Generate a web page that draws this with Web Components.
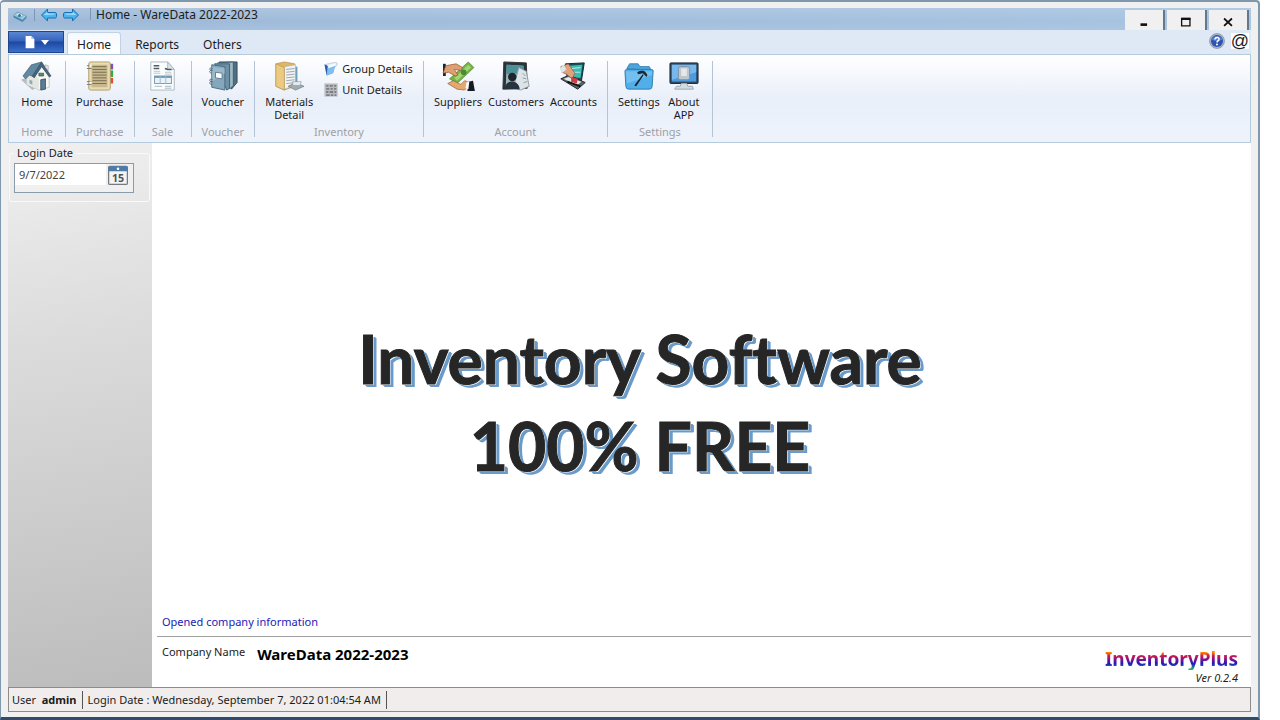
<!DOCTYPE html>
<html lang="en">
<head>
<meta charset="utf-8">
<title>Home - WareData 2022-2023</title>
<style>
html,body{margin:0;height:100%;background:#fff}
body{font:11px/16px "Noto Sans","Open Sans",sans-serif;color:#1c1c1c}
</style>
</head>
<body>
<inventory-app></inventory-app>
<script>
const parse=html=>{const t=document.createElement('template');t.innerHTML=html;return t.content;};
const define=(name,html,init)=>{
  const content=parse(html);
  customElements.define(name,class extends HTMLElement{
    constructor(){super();this.attachShadow({mode:'open'}).append(content.cloneNode(true));}
    connectedCallback(){if(init&&!this.ready){this.ready=true;init(this,this.shadowRoot);}}
  });
};

const ICONS={
app:`<path d="M3 17l7-7 19 8-8 8z" fill="#9ccbe2" stroke="#5b93b3"/><path d="M3 17v4l18 9 8-8v-4l-8 8z" fill="#4c88ad"/><path d="M8 15c3-5 12-3 14 3-5 3-10 2-14-3z" fill="#e8f6fc" stroke="#3b7ba3"/><circle cx="15" cy="17" r="3" fill="#30749f"/>`,
left:`<path d="M1 16L13 4v7h15c2 0 3 1 3 3v5c0 2-1 3-3 3H13v6z" fill="#4ab5ef" stroke="#176fb5" stroke-width="2"/><path d="M6 16l7-6v3h14v2z" fill="#a6e1ff"/>`,
right:`<path d="M31 16L19 4v7H4c-2 0-3 1-3 3v5c0 2 1 3 3 3h15v6z" fill="#4ab5ef" stroke="#176fb5" stroke-width="2"/><path d="M26 16l-7-6v3H5v2z" fill="#a6e1ff"/>`,
home:`<path d="M-1 20l9-4 8 12-5 3z" fill="#8f989d" opacity=".6"/><path d="M5 14L20 4l9 12v12l-11 3-13-6z" fill="#f8f7f3" stroke="#a9aaa5" stroke-width=".6"/><path d="M5 16l8-2 5 5v12L5 25z" fill="#e4e6e2"/><path d="M1 16L10 4l11-3-8 16-5-2-4 4z" fill="#6189a2" stroke="#2e4b60" stroke-width=".6"/><path d="M21 1l10 15-2 1-8-11-8 12-2-2z" fill="#44677f" stroke="#2b4558" stroke-width=".6"/><path d="M20 20l5-1v11l-5 1z" fill="#5a7d96" stroke="#2c424f" stroke-width=".8"/><path d="M18 13h5v3h-5z" fill="#4b9568" stroke="#344" stroke-width=".7"/><path d="M8 20l3 1v4l-3-1z" fill="#8eaabc"/><path d="M25 4l3 1v5l-3-3z" fill="#e8e5df" stroke="#888" stroke-width=".5"/>`,
purchase:`<rect x="26" y="3" width="4" height="6" fill="#7752c3"/><rect x="26" y="10" width="4" height="7" fill="#32ac3c"/><rect x="26" y="18" width="4" height="6" fill="#e44d30"/><rect x="4" y="1" width="23" height="30" rx="2" fill="#eadcae" stroke="#b09c6c"/><rect x="7" y="4" width="17" height="24" fill="#c7b98d"/><path d="M8 6h15M8 9h15M8 12h15M8 15h15M8 18h15M8 21h15M8 24h15" stroke="#756b50"/><path d="M2 5h5M2 8h5M2 22h5M2 25h5" stroke="#777" stroke-width="1"/><circle cx="6" cy="5" r="1.2" fill="#fff"/><circle cx="6" cy="23" r="1.2" fill="#fff"/>`,
sale:`<path d="M3 1h18l7 8v22H3z" fill="#fbfcfd" stroke="#adb8bf"/><path d="M21 1v8h7z" fill="#dce5e9" stroke="#aab4bb"/><path d="M6 5h6M6 8h6M18 8l3 1h4" stroke="#4c5d69" stroke-width="1.5"/><path d="M6 11h7M6 13h7M18 12h7M18 14h7" stroke="#bbc5ca"/><rect x="7" y="16" width="18" height="8" fill="#e8f3f9" stroke="#779bb0"/><path d="M7 17h18" stroke="#6e98b4" stroke-width="2"/><path d="M13 16v8M19 16v8M7 27h8M18 27h7M18 29h7" stroke="#9fb9c8"/>`,
voucher:`<path d="M12 1l19 0v22l-6 7z" fill="#516f81" stroke="#344d5c"/><path d="M10 2l17-1v25l-4 4" fill="#9fb9c7" stroke="#405e70"/><path d="M7 3l16 0v26l-3 2z" fill="#6e91a5" stroke="#405e70"/><path d="M4 4l14 2v25L4 28z" fill="#84a7bc" stroke="#476b80"/><path d="M4 6l14 2v5L4 22z" fill="#b1cbd9" opacity=".5"/><path d="M8 12l7 1v6l-7-1z" fill="#fff" stroke="#5a7c90"/><path d="M5 8c-4-2-4 2-1 2m1 0c-4-1-4 3-1 3m1 7c-4-2-4 2-1 2m1 0c-4-1-4 3-1 3" fill="none" stroke="#506775"/>`,
materials:`<path d="M2 3l9-2 11 2v24l-11 4-9-4z" fill="#dfb661" stroke="#b88d46" stroke-width=".7"/><path d="M11 6l12-2v22l-12 4z" fill="#f1f3f3" stroke="#9eaaae" stroke-width=".6"/><path d="M13 9l9-1M13 12l9-1M13 15l9-1M13 18l9-1M13 21l9-1M13 24l9-1" stroke="#97a5ad"/><path d="M2 3l9 4v24L2 27z" fill="#ecca82" stroke="#bd9648" stroke-width=".7"/><path d="M24 6v17" stroke="#6fa1b8" stroke-width="2"/><path d="M15 27l8-4 9 4-9 4z" fill="#a1acb2" stroke="#5f6c72" stroke-width=".6"/><path d="M20 22h9l-1 4h-8z" fill="#e8ecee" stroke="#82909a" stroke-width=".6"/>`,
group:`<path d="M5 5l19-4 6 1v5L10 27z" fill="#dceefa" stroke="#8fa8bb"/><path d="M2 5l6 4 18-4-5 20-15 6z" fill="#62a5e4"/><path d="M8 12l19-6-7 20-13 5z" fill="#80bdf1"/><path d="M9 8l18-5v5L10 14z" fill="#f8fcff"/><path d="M1 5l7 4-2 22z" fill="#275da4"/>`,
unit:`<rect x="1" y="1" width="30" height="30" fill="#b8babd"/><path d="M5 5h5v3H5zm8 0h7v3h-7zm10 0h5v3h-5zM5 12h7v3H5zm10 0h5v3h-5zm8 0h5v3h-5zM5 19h5v3H5zm8 0h8v3h-8zm11 0h4v3h-4zM5 26h8v3H5zm11 0h5v3h-5zm8 0h4v3h-4z" fill="#66696d"/>`,
suppliers:`<path d="M0 3h3v13H0z" fill="#1b2734"/><path d="M7 19L27 1l6 6-18 17z" fill="#73b543" stroke="#356e29" stroke-width=".6"/><path d="M12 18L27 4l3 3-15 14z" fill="#a3d46f"/><circle cx="22" cy="12" r="3" fill="#478b34"/><path d="M3 5l11-2 7 4-2 3-7-1 4 6-3 1-7-4-6 1z" fill="#dfa071" stroke="#8a4f2b" stroke-width=".7"/><path d="M5 24l6-3 8 4 4-4 3 1 1 5-4 4-8-1z" fill="#e7a870" stroke="#915b32" stroke-width=".7"/><path d="M27 22l5-1 2 11h-8z" fill="#141b22"/><path d="M25 23l3-1-1 8-3-1z" fill="#fff"/>`,
customers:`<path d="M3 1l24 1 1 27-26 1z" fill="#25343c" stroke="#333"/><path d="M6 4l18 1v23L5 28z" fill="#9fb6b9"/><path d="M6 4l18 1v8L6 14z" fill="#4d9197"/><path d="M19 7l8 4 3 16-9 4-8-2z" fill="#dce4e8" stroke="#8f9ba1"/><circle cx="12" cy="17" r="4.500" fill="#1c262d"/><path d="M4 30c0-11 15-11 16 0z" fill="#263440"/><path d="M23 13l3 3M23 18l4 1M24 23l4-1" stroke="#8a9ba4"/>`,
accounts:`<path d="M8 3l20-1-3 19-15-1z" fill="#194d53" stroke="#0a292d"/><path d="M12 5l14-1-2 14-10-1z" fill="#3bbbb6"/><path d="M15 8l9-1M16 12h8" stroke="#bff0e8"/><path d="M3 19l9-4 17 8-8 7z" fill="#5b6265" stroke="#22282a"/><path d="M6 19l5-2 14 5-5 4z" fill="#e5e9e9"/><path d="M3 6l8-3 7 10-3 6-6-5-5-2z" fill="#e2a17d" stroke="#885541" stroke-width=".7"/><path d="M14 17l7 2-1 5-6-2z" fill="#d13c40"/><path d="M10 22l14 5" stroke="#111" stroke-width="2"/><path d="M2 8l4-4 3 5-5 4z" fill="#dce7e9"/>`,
settings:`<path d="M3 8l3-5h9l2 3h10l2 4z" fill="#4da4df" stroke="#3a81b2"/><path d="M1 11q0-2 2-2h26q3 0 2 3l-1 15q0 3-3 3H5q-3 0-3-3z" fill="#51aee9" stroke="#2c7eae"/><path d="M2 11h28v4L3 24z" fill="#91d1f6" opacity=".5"/><path d="M11 26l9-12 1 1-8 12z" fill="#15222f"/><path d="M14 12c4-2 7-2 9 0l2 3-1 2-2-2-2-2-5 1z" fill="#1b2733"/>`,
about:`<rect x="1" y="2" width="30" height="22" rx="1" fill="#314960" stroke="#18293a"/><path d="M3 4h26v18H3z" fill="#4b9be1"/><path d="M3 4h26v8L3 20z" fill="#78b8ed"/><rect x="10" y="6" width="12" height="14" rx="2" fill="#bfc6cc" stroke="#7792a7"/><rect x="13" y="8" width="6" height="8" fill="#e5e9eb"/><path d="M13 24h6l1 3h5l1 3H6l2-3h4z" fill="#d4dce1" stroke="#9ba8b1"/>`,
doc:`<path d="M6 2h13l7 7v21H6z" fill="#fff"/><path d="M19 2v7h7z" fill="#abc1e0"/>`,
help:`<circle cx="16" cy="16" r="15" fill="#aab4c7" stroke="#6c7486"/><circle cx="16" cy="16" r="12" fill="#2854b4"/><path d="M5 13a12 12 0 0 1 22 0q-11 6-22 0z" fill="#8ba7dd" opacity=".5"/><path d="M12 13c0-6 9-5 8 0-1 3-4 3-4 6" fill="none" stroke="#fff" stroke-width="3"/><circle cx="16" cy="23" r="2" fill="#fff"/>`,
calendar:`<rect x="1" y="2" width="30" height="29" rx="2" fill="#f4f4f4" stroke="#737a80" stroke-width="2"/><path d="M1 2h30v8H1z" fill="#4b7ca9"/><circle cx="16" cy="6" r="2" fill="#fff"/><text x="16" y="27" text-anchor="middle" font-family="Open Sans" font-size="17" font-weight="700" fill="#4b5359">15</text>`,
min:`<path d="M8 19h15v6H8z" fill="#111"/>`,
max:`<path d="M6 8h19v17H6z" fill="none" stroke="#111" stroke-width="3"/><path d="M5 9h21" stroke="#111" stroke-width="5"/>`,
close:`<path d="M7 8l18 17M25 8L7 25" stroke="#111" stroke-width="4"/>`
};

define('ui-icon',`<style>:host{display:block;flex:none;width:16px;height:16px}svg{display:block;width:100%;height:100%;overflow:visible}</style>`,
 (el,root)=>root.append(parse(`<svg viewBox="0 0 32 32" aria-hidden="true">${ICONS[el.getAttribute('name')]}</svg>`)));

define('window-button',`<style>:host{display:block}button{display:flex;align-items:center;justify-content:center;width:40px;height:20px;padding:4px 0 0;border:0;border-right:2px solid #66778c;background:#f0f0f0}ui-icon{width:14px;height:14px}</style><button></button>`,
 (el,root)=>{const b=root.querySelector('button');b.setAttribute('aria-label',el.getAttribute('label'));b.append(parse(`<ui-icon name="${el.getAttribute('icon')}"></ui-icon>`));});

define('title-bar',`<style>
:host{display:flex;align-items:flex-start;height:22px;background:linear-gradient(90deg,#0000,#b7d3ef66),linear-gradient(#adc4de,#9db9d7 60%,#a5bfdc)}
.quick{display:flex;align-items:center;gap:6px;padding:0 11px 0 4px;height:14px}
.quick ui-icon{height:16px}i{width:1px;height:12px;background:#7f96b1}
h1{font:inherit;font-size:12px;margin:-1px auto 0 5px}.caption{display:flex;gap:2px;padding:2px 2px 0 0}
button{border:0;padding:0;background:none}
</style>
<div class="quick"><ui-icon name="app"></ui-icon><i></i><button aria-label="Back"><ui-icon name="left"></ui-icon></button><button aria-label="Forward"><ui-icon name="right"></ui-icon></button></div><i></i>
<h1>Home - WareData 2022-2023</h1>
<div class="caption"><window-button icon="min" label="Minimize"></window-button><window-button icon="max" label="Maximize"></window-button><window-button icon="close" label="Close"></window-button></div>`);

define('ribbon-tabs',`<style>
:host{display:flex;align-items:flex-end;height:24px;background:#dfe9f5}
button{font:inherit;color:inherit;border:0;background:none;padding:0}
.file{display:flex;align-items:center;justify-content:center;gap:4px;width:56px;height:22px;align-self:flex-end;background:linear-gradient(#5b86d0,#3463bd 45%,#1d48a0 50%,#3b70cb);border:1px solid #21468d;box-sizing:border-box;margin:0 3px 1px 0}
.file i{border:4px solid #0000;border-top:5px solid #fff;border-bottom:0}.file ui-icon{width:14px;height:14px}
.tab{height:22px;padding:3px 10px 0;margin-right:4px;font-size:12px}
.on{background:linear-gradient(#f5f9fe,#fff);border:1px solid #c3d2e3;border-bottom:0;border-radius:3px 3px 0 0;padding:2px 9px 0}
.end{display:flex;align-items:center;gap:6px;margin-left:auto;align-self:flex-start;padding:3px 2px 0 0}
.at{font:18px/16px "Liberation Sans",sans-serif;background:#fff}
</style>
<button class="file" aria-label="File"><ui-icon name="doc"></ui-icon><i></i></button>
<button class="tab on">Home</button><button class="tab">Reports</button><button class="tab">Others</button>
<div class="end"><button aria-label="Help"><ui-icon name="help"></ui-icon></button><button class="at">@</button></div>`);

define('ribbon-button',`<style>
:host{display:block}button{display:flex;flex-direction:column;align-items:center;gap:4px;min-width:42px;padding:0 3px;border:0;background:none;font:inherit;line-height:13px;color:inherit;white-space:nowrap}
ui-icon{width:30px;height:30px}
:host([small]) button{flex-direction:row;line-height:16px}
:host([small]) ui-icon{width:14px;height:14px}
</style><button><span><slot></slot></span></button>`,
 (el,root)=>root.querySelector('button').prepend(parse(`<ui-icon name="${el.getAttribute('icon')}"></ui-icon>`)));

define('ribbon-group',`<style>
:host{display:flex;flex-direction:column;justify-content:space-between;padding:0 7px;border-right:1px solid #b4c3d6;height:76px}
.items{display:flex}.cap{text-align:center;color:#9d9fa6;line-height:10px}
</style><div class="items"><slot></slot></div><div class="cap"></div>`,
 (el,root)=>{root.querySelector('.cap').textContent=el.getAttribute('caption');});

define('ribbon-bar',`<style>
:host{display:flex;box-sizing:border-box;padding:6px 0;border:1px solid #b3cbdc;background:linear-gradient(#fff,#e9eff9 50%,#eef3fb);height:89px}
.col{display:flex;flex-direction:column;gap:5px;padding-left:5px}
</style>
<ribbon-group caption="Home"><ribbon-button icon="home">Home</ribbon-button></ribbon-group>
<ribbon-group caption="Purchase"><ribbon-button icon="purchase">Purchase</ribbon-button></ribbon-group>
<ribbon-group caption="Sale"><ribbon-button icon="sale">Sale</ribbon-button></ribbon-group>
<ribbon-group caption="Voucher"><ribbon-button icon="voucher">Voucher</ribbon-button></ribbon-group>
<ribbon-group caption="Inventory"><ribbon-button icon="materials">Materials<br>Detail</ribbon-button><div class="col"><ribbon-button small icon="group">Group Details</ribbon-button><ribbon-button small icon="unit">Unit Details</ribbon-button></div></ribbon-group>
<ribbon-group caption="Account"><ribbon-button icon="suppliers">Suppliers</ribbon-button><ribbon-button icon="customers">Customers</ribbon-button><ribbon-button icon="accounts">Accounts</ribbon-button></ribbon-group>
<ribbon-group caption="Settings"><ribbon-button icon="settings">Settings</ribbon-button><ribbon-button icon="about">About<br>APP</ribbon-button></ribbon-group>`);

define('login-panel',`<style>
:host{display:block;box-sizing:border-box;width:144px;padding:2px 2px 0 1px;background:linear-gradient(170deg,#f0f0f0,#dcdcdc 35%,#bcbcbc)}
fieldset{margin:0;padding:2px 4px 8px;border:1px solid #fafafa;border-radius:3px}
legend{padding:0 3px}
.field{display:flex;align-items:flex-start;box-sizing:border-box;width:120px;height:30px;border:1px solid #8a9bad;background:#f0f0f0}
input{font:inherit;color:#444;width:91px;height:21px;box-sizing:border-box;border:0;padding:0 4px;background:#fff;min-width:0}
button{border:0;background:none;padding:1px 0 0 2px}ui-icon{width:20px;height:20px}
</style>
<fieldset><legend><label for="d">Login Date</label></legend><div class="field"><input id="d" value="9/7/2022"><button aria-label="Open calendar"><ui-icon name="calendar"></ui-icon></button></div></fieldset>`);

define('company-info',`<style>
:host{display:flex;flex-direction:column;justify-content:flex-end;flex:1;background:#fff;padding-left:5px}
h2{font:inherit;color:#1a1ab8;margin:0;padding:0 5px 6px}
.row{display:flex;align-items:flex-start;justify-content:space-between;border-top:1px solid #a0a0a0;padding:7px 13px 0 5px;height:43px}
dl{display:flex;gap:12px;margin:0}dd{margin:0;font-size:15px;font-weight:700;color:#000;line-height:20px}
.brand{text-align:right;padding-top:4px}
strong{display:block;font-size:19px;line-height:22px;background:linear-gradient(#f80 20%,#d31b45 35%,#7a1497 52%,#2814b8 70%,#1a4ab0 80%,#2ab060 95%);background-clip:text;-webkit-background-clip:text;color:transparent}
em{display:block}
</style>
<h2>Opened company information</h2>
<div class="row"><dl><dt>Company Name</dt><dd>WareData 2022-2023</dd></dl><div class="brand"><strong>InventoryPlus</strong><em>Ver 0.2.4</em></div></div>`);

define('status-bar',`<style>
:host{display:flex;align-items:center;box-sizing:border-box;height:25px;padding:0 3px;border:1px solid #8c8c8c;background:#f0edec}
span{padding-right:5px;margin-right:5px;border-right:1px solid #555;line-height:18px;white-space:pre}
</style><span>User  <b>admin</b></span><span>Login Date : Wednesday, September 7, 2022 01:04:54 AM</span>`);

define('promo-title',`<style>
:host{position:absolute;inset:315px 0 auto;text-align:center;pointer-events:none;font:700 66px/87px Lato,sans-serif;font-variant-ligatures:none;color:#262626;-webkit-text-stroke:1px #262626;text-shadow:1px 1px 0 #fff,2px 2px 0 #6a9bca,3px 2px 0 #6a9bca,3px 3px 0 #6a9bca,4px 3px 0 #6a9bca}
p{margin:0}
</style><p>Inventory Software</p><p>100% FREE</p>`);

define('inventory-app',`<style>
:host{display:block;position:relative;min-height:100vh;padding-right:20px;box-sizing:border-box}
.window{display:flex;flex-direction:column;box-sizing:border-box;min-height:100vh;border:solid #7f98ad;border-width:2px 2px 3px 1px;border-bottom-color:#344a6b;background:#f0f0f0;border-radius:4px 4px 0 0;padding:6px 7px 5px}
.body{display:flex;flex:1}
</style>
<div class="window"><title-bar></title-bar><ribbon-tabs></ribbon-tabs><ribbon-bar></ribbon-bar><div class="body"><login-panel></login-panel><company-info></company-info></div><status-bar></status-bar></div>
<promo-title></promo-title>`);
</script>
</body>
</html>
